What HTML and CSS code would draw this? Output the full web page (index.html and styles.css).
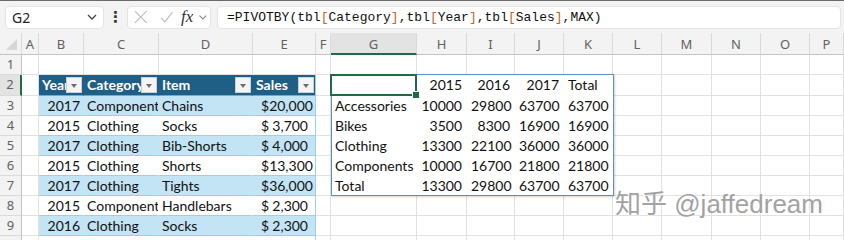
FILE: index.html
```html
<!DOCTYPE html>
<html>
<head>
<meta charset="utf-8">
<link rel="stylesheet" href="styles.css">
</head>
<body>
<div class="bar">
  <div class="namebox"><span>G2</span><svg class="chev" width="10" height="6" viewBox="0 0 10 6"><path d="M1 1 L5 5 L9 1" fill="none" stroke="#444" stroke-width="1.3"/></svg></div>
  <div class="dots">⋮</div>
  <div class="fxbox">
    <svg width="14" height="14" viewBox="0 0 14 14"><path d="M1 1 L13 13 M13 1 L1 13" stroke="#bdbdbd" stroke-width="1.2"/></svg>
    <svg width="14" height="14" viewBox="0 0 14 14"><path d="M1 8 L5 12 L13 2" fill="none" stroke="#bdbdbd" stroke-width="1.2"/></svg>
    <span class="fx">fx</span>
    <svg width="8" height="5" viewBox="0 0 8 5"><path d="M0.5 0.5 L4 4 L7.5 0.5" fill="none" stroke="#888" stroke-width="1.1"/></svg>
  </div>
  <div class="formula">=PIVOTBY(tbl<b>[</b>Category<b>]</b>,tbl<b>[</b>Year<b>]</b>,tbl<b>[</b>Sales<b>]</b>,MAX)</div>
</div>
<div class="sheet">
  <div class="ch corner"></div><div class="ch">A</div><div class="ch">B</div><div class="ch">C</div><div class="ch">D</div><div class="ch">E</div><div class="ch">F</div><div class="ch sel">G</div><div class="ch">H</div><div class="ch">I</div><div class="ch">J</div><div class="ch">K</div><div class="ch">L</div><div class="ch">M</div><div class="ch">N</div><div class="ch">O</div><div class="ch">P</div>

  <div class="rh">1</div><div></div><div></div><div></div><div></div><div></div><div></div><div></div><div></div><div></div><div></div><div></div><div></div><div></div><div></div><div></div><div></div>

  <div class="rh rsel">2</div><div></div>
  <div class="th">Year<span class="fb"></span></div><div class="th">Category<span class="fb"></span></div><div class="th">Item<span class="fb"></span></div><div class="th te">Sales<span class="fb"></span></div>
  <div></div><div class="pv"></div><div class="pv num">2015</div><div class="pv num">2016</div><div class="pv num">2017</div><div class="pv">Total</div>
  <div></div><div></div><div></div><div></div><div></div>

  <div class="rh">3</div><div></div>
  <div class="tb num">2017</div><div class="tb">Component</div><div class="tb">Chains</div><div class="tb te acc"><span>$</span><span>20,000</span></div>
  <div></div><div class="pv">Accessories</div><div class="pv num">10000</div><div class="pv num">29800</div><div class="pv num">63700</div><div class="pv num">63700</div>
  <div></div><div></div><div></div><div></div><div></div>

  <div class="rh">4</div><div></div>
  <div class="tw num">2015</div><div class="tw">Clothing</div><div class="tw">Socks</div><div class="tw te acc"><span>$</span><span>3,700</span></div>
  <div></div><div class="pv">Bikes</div><div class="pv num">3500</div><div class="pv num">8300</div><div class="pv num">16900</div><div class="pv num">16900</div>
  <div></div><div></div><div></div><div></div><div></div>

  <div class="rh">5</div><div></div>
  <div class="tb num">2017</div><div class="tb">Clothing</div><div class="tb">Bib-Shorts</div><div class="tb te acc"><span>$</span><span>4,000</span></div>
  <div></div><div class="pv">Clothing</div><div class="pv num">13300</div><div class="pv num">22100</div><div class="pv num">36000</div><div class="pv num">36000</div>
  <div></div><div></div><div></div><div></div><div></div>

  <div class="rh">6</div><div></div>
  <div class="tw num">2015</div><div class="tw">Clothing</div><div class="tw">Shorts</div><div class="tw te acc"><span>$</span><span>13,300</span></div>
  <div></div><div class="pv">Components</div><div class="pv num">10000</div><div class="pv num">16700</div><div class="pv num">21800</div><div class="pv num">21800</div>
  <div></div><div></div><div></div><div></div><div></div>

  <div class="rh">7</div><div></div>
  <div class="tb num">2017</div><div class="tb">Clothing</div><div class="tb">Tights</div><div class="tb te acc"><span>$</span><span>36,000</span></div>
  <div></div><div class="pv">Total</div><div class="pv num">13300</div><div class="pv num">29800</div><div class="pv num">63700</div><div class="pv num">63700</div>
  <div></div><div></div><div></div><div></div><div></div>

  <div class="rh">8</div><div></div>
  <div class="tw num">2015</div><div class="tw">Component</div><div class="tw">Handlebars</div><div class="tw te acc"><span>$</span><span>2,300</span></div>
  <div></div><div></div><div></div><div></div><div></div><div></div>
  <div></div><div></div><div></div><div></div><div></div>

  <div class="rh">9</div><div></div>
  <div class="tb num">2016</div><div class="tb">Clothing</div><div class="tb">Socks</div><div class="tb te acc"><span>$</span><span>2,300</span></div>
  <div></div><div></div><div></div><div></div><div></div><div></div>
  <div></div><div></div><div></div><div></div><div></div>

  <div class="rh"></div><div></div>
  <div class="tw"></div><div class="tw"></div><div class="tw"></div><div class="tw te"></div>
  <div></div><div></div><div></div><div></div><div></div><div></div>
  <div></div><div></div><div></div><div></div><div></div>

  <div class="spill"></div>
  <div class="cursor"><span class="handle"></span></div>
</div>
<div class="wm">知乎 @jaffedream</div>
</body>
</html>
```
FILE: styles.css
```css
html, body {
  margin: 0;
  padding: 0;
}
body {
  width: 844px;
  height: 240px;
  overflow: hidden;
  background: #fff;
  position: relative;
  font-family: Lato, "Liberation Sans", sans-serif;
}
.bar {
  height: 33px;
  box-sizing: border-box;
  background: #f3f3f3;
  border-top: 1px solid #6a6a6a;
  display: flex;
  align-items: center;
  padding: 0 3px 0 5px;
}
.namebox {
  width: 99px;
  height: 23px;
  box-sizing: border-box;
  background: #fff;
  border: 1px solid #e4e4e4;
  border-radius: 4px;
  display: flex;
  align-items: center;
  justify-content: space-between;
  padding: 0 6px 0 6px;
  font: 14px "Noto Sans", sans-serif;
  color: #222;
}
.dots {
  width: 23px;
  text-align: center;
  font: bold 15px "DejaVu Sans", sans-serif;
  color: #333;
}
.fxbox {
  width: 84px;
  height: 23px;
  box-sizing: border-box;
  background: #fff;
  border: 1px solid #e4e4e4;
  border-radius: 4px;
  display: flex;
  align-items: center;
  padding: 0 3px 0 6px;
  gap: 10px;
}
.fxbox svg + svg { margin-left: 2px; }
.fx {
  font: italic 17px "Liberation Serif", serif;
  color: #333;
  margin-left: -2px;
  margin-right: -4px;
}
.formula {
  flex: 1;
  margin-left: 6px;
  height: 23px;
  box-sizing: border-box;
  background: #fff;
  border: 1px solid #e4e4e4;
  border-radius: 4px;
  padding: 0 9px;
  font: 13px/21px "Liberation Mono", monospace;
  color: #111;
  white-space: nowrap;
}
.formula b {
  font-weight: normal;
  color: #c0662a;
}
.sheet {
  position: relative;
  display: grid;
  grid-template-columns: 22px 17px 45px 75px 94px 63px 15px 86px 50px 48px 49px 49px 49px 50px 49px 49px 34px;
  grid-template-rows: 22px 20px 21px repeat(8, 20px);
}
.sheet > div {
  box-sizing: border-box;
  border-right: 1px solid #e1e1e1;
  border-bottom: 1px solid #e1e1e1;
  overflow: hidden;
  white-space: nowrap;
  padding: 0 3px;
  font-size: 14px;
  line-height: 19px;
  color: #111;
}
.sheet > .ch {
  background: #f3f3f3;
  color: #616161;
  text-align: center;
  font: 13px/22px "Noto Sans", sans-serif;
  border-right-color: #dadada;
  border-bottom-color: #c4c4c4;
  padding: 0;
}
.sheet > .ch.sel {
  background: #e3e3e3;
  border-bottom: 2px solid #1e6b45;
}
.sheet > .corner {
  position: relative;
}
.corner::after {
  content: "";
  position: absolute;
  right: 4px;
  bottom: 4px;
  border-left: 11px solid transparent;
  border-bottom: 11px solid #d6d6d6;
}
.sheet > .rh {
  background: #f3f3f3;
  color: #616161;
  text-align: center;
  font: 13px/19px "Noto Sans", sans-serif;
  border-right-color: #c4c4c4;
  border-bottom-color: #dadada;
  padding: 0;
}
.sheet > .rh.rsel {
  background: #e3e3e3;
  border-right: 2px solid #1e6b45;
}
.sheet > .num { text-align: right; }
.sheet > .th {
  position: relative;
  background: #1f5f86;
  color: #fff;
  font-weight: bold;
  border-right-color: transparent;
  border-bottom-color: #6aaed3;
}
.sheet > .tb {
  background: #c2e4f5;
  border-right-color: transparent;
  border-bottom-color: #9fcfe8;
}
.sheet > .tw {
  background: #fff;
  border-right-color: transparent;
  border-bottom-color: #9fcfe8;
}
.sheet > .te { border-right-color: #9fcfe8; }
.sheet > .acc {
  display: flex;
  justify-content: space-between;
  padding: 0 7px 0 8px;
}
.fb {
  position: absolute;
  right: 1px;
  top: 2px;
  width: 16px;
  height: 16px;
  box-sizing: border-box;
  background: #f4f4f4;
  border: 1px solid #cfcfcf;
}
.fb::after {
  content: "";
  position: absolute;
  left: 4px;
  top: 6px;
  border-left: 3.5px solid transparent;
  border-right: 3.5px solid transparent;
  border-top: 4px solid #6d6d6d;
}
.sheet > .pv {
  background: #fff;
  border-color: transparent;
  padding: 0 4px;
}
.sheet > .spill {
  position: absolute;
  grid-column: 8 / 13;
  grid-row: 3 / 9;
  inset: -1px -1px 0 0;
  border: 1px solid #5f8fbf;
  box-shadow: 1px 1px 2px rgba(0,0,0,0.18);
  pointer-events: none;
  padding: 0;
}
.sheet > .cursor {
  position: absolute;
  grid-column: 8 / 9;
  grid-row: 3 / 4;
  inset: -1px 0 0 -1px;
  border: 2px solid #1e6b45;
  overflow: visible;
  padding: 0;
}
.handle {
  position: absolute;
  right: -5px;
  bottom: -5px;
  width: 6px;
  height: 6px;
  background: #1e6b45;
  border: 1px solid #fff;
}
.wm {
  position: absolute;
  left: 615px;
  top: 183px;
  font: 26px "Liberation Sans", "Noto Sans CJK SC", sans-serif;
  color: #a2a2a2;
  text-shadow: 0 0 2px #fff, 0 0 1px #fff;
  white-space: nowrap;
}
```
